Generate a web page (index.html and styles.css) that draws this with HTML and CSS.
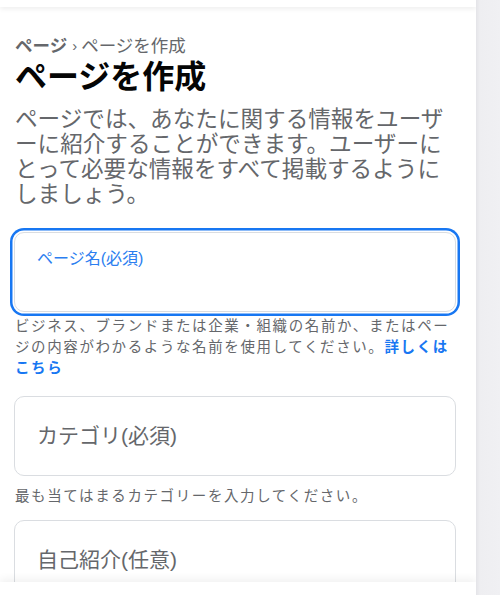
FILE: index.html
```html
<!DOCTYPE html>
<html lang="ja">
<head>
<meta charset="utf-8">
<title>ページを作成</title>
<link rel="stylesheet" href="styles.css">
</head>
<body>
<div class="shell">
  <main class="page">
    <div class="topbar"></div>
    <div class="content">
      <nav class="crumbs"><span class="crumb-root">ページ</span><span class="crumb-sep">›</span><span>ページを作成</span></nav>
      <h1 class="title">ページを作成</h1>
      <p class="lead">ページでは、あなたに関する情報をユーザーに紹介することができます。ユーザーにとって必要な情報をすべて掲載するようにしましょう。</p>

      <div class="field field-focused">
        <span class="field-label">ページ名(必須)</span>
      </div>
      <p class="help help-first"><span class="help-part">ビジネス、ブランドまたは企業・組織の名前か、またはペー</span><span class="help-part">ジの内容がわかるような名前を使用してください。</span><a class="help-link" href="#"><span class="help-part">詳しくは</span><span class="help-part">こちら</span></a></p>

      <div class="field">
        <span class="field-placeholder">カテゴリ(必須)</span>
      </div>
      <p class="help help-second">最も当てはまるカテゴリーを入力してください。</p>

      <div class="field">
        <span class="field-placeholder">自己紹介(任意)</span>
      </div>
    </div>
    <div class="footer"></div>
  </main>
  <aside class="side"></aside>
</div>
</body>
</html>
```

FILE: styles.css
```css
html, body {
  margin: 0;
  padding: 0;
  background: #ffffff;
}
body {
  font-family: "Liberation Sans", "Noto Sans CJK JP", sans-serif;
  color: #050505;
}
.shell {
  display: flex;
  width: 500px;
  height: 595px;
  overflow: hidden;
}
.page {
  position: relative;
  width: 476px;
  height: 595px;
  background: #ffffff;
  overflow: hidden;
  flex: none;
}
.topbar {
  height: 7px;
  background: #ffffff;
  box-shadow: 0 2px 5px rgba(0, 0, 0, 0.07);
  position: relative;
  z-index: 2;
}
.content {
  padding: 0 20px 0 14px;
}
.crumbs {
  margin-top: 29px;
  font-size: 17.5px;
  line-height: 20px;
  color: #65676b;
  display: flex;
  align-items: center;
  padding-left: 1px;
}
.crumb-root {
  font-weight: 700;
}
.crumb-sep {
  margin: 0 4px 0 5px;
  font-size: 15px;
}
.title {
  margin: 2px 0 0 0;
  font-size: 32px;
  line-height: 38px;
  font-weight: 700;
  color: #050505;
  padding-left: 1px;
}
.lead {
  margin: 11px 0 0 0;
  font-size: 22.6px;
  line-height: 25px;
  color: #65676b;
  padding-left: 1px;
  line-break: normal;
}
.field {
  box-sizing: border-box;
  height: 80px;
  border: 1px solid #dadde1;
  border-radius: 10px;
  padding: 0 22px;
  display: flex;
  align-items: center;
  background: #ffffff;
}
.field-focused {
  margin-top: 25px;
  align-items: flex-start;
  padding-top: 16px;
  box-shadow: 0 0 0 1.5px #ffffff, 0 0 0 4px #1877f2;
}
.field-label {
  font-size: 16px;
  line-height: 20px;
  color: #2b7ef0;
}
.field-placeholder {
  font-size: 21px;
  line-height: 26px;
  color: #65676b;
}
.help {
  margin: 0;
  font-size: 14.5px;
  letter-spacing: 1.6px;
  line-height: 21px;
  color: #65676b;
  padding-left: 1px;
}
.help-first {
  margin-top: 4px;
  margin-bottom: 17px;
}
.help-second {
  margin-top: 10px;
  margin-bottom: 13px;
}
.help-link {
  color: #1877f2;
  font-weight: 700;
  text-decoration: none;
}
.footer {
  position: absolute;
  left: 0;
  right: 0;
  bottom: 0;
  height: 13px;
  background: #ffffff;
  box-shadow: 0 -3px 8px rgba(0, 0, 0, 0.06);
}
.side {
  flex: 1;
  background: linear-gradient(to right, #e4e4e8 0, #eeeef1 4px, #f0f0f3 100%);
}
```
